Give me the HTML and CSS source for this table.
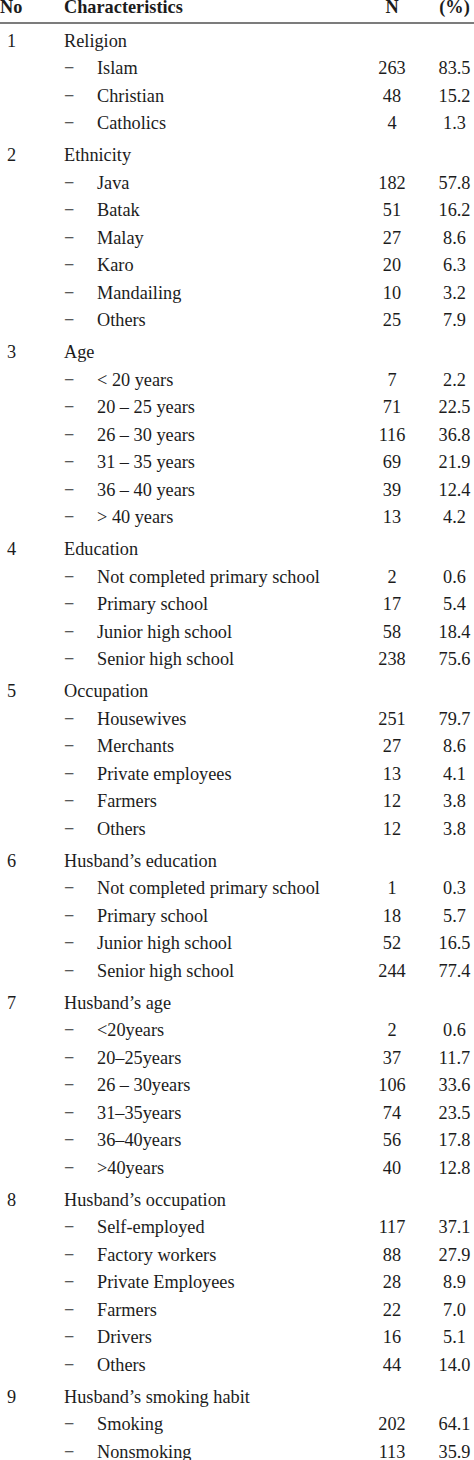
FILE: index.html
```html
<!DOCTYPE html>
<html>
<head>
<meta charset="utf-8">
<link rel="stylesheet" href="styles.css">
</head>
<body>
<div class="table">
  <div class="row head">
    <div class="no">No</div>
    <div class="ch">Characteristics</div>
    <div class="n">N</div>
    <div class="p">(%)</div>
  </div>
  <div id="body"></div>
</div>
<script src="app.js"></script>
</body>
</html>
```
FILE: app.js
```js
var data = [
  ["1","Religion",[["Islam","263","83.5"],["Christian","48","15.2"],["Catholics","4","1.3"]]],
  ["2","Ethnicity",[["Java","182","57.8"],["Batak","51","16.2"],["Malay","27","8.6"],["Karo","20","6.3"],["Mandailing","10","3.2"],["Others","25","7.9"]]],
  ["3","Age",[["< 20 years","7","2.2"],["20 \u2013 25 years","71","22.5"],["26 \u2013 30 years","116","36.8"],["31 \u2013 35 years","69","21.9"],["36 \u2013 40 years","39","12.4"],["> 40 years","13","4.2"]]],
  ["4","Education",[["Not completed primary school","2","0.6"],["Primary school","17","5.4"],["Junior high school","58","18.4"],["Senior high school","238","75.6"]]],
  ["5","Occupation",[["Housewives","251","79.7"],["Merchants","27","8.6"],["Private employees","13","4.1"],["Farmers","12","3.8"],["Others","12","3.8"]]],
  ["6","Husband\u2019s education",[["Not completed primary school","1","0.3"],["Primary school","18","5.7"],["Junior high school","52","16.5"],["Senior high school","244","77.4"]]],
  ["7","Husband\u2019s age",[["<20years","2","0.6"],["20\u201325years","37","11.7"],["26 \u2013 30years","106","33.6"],["31\u201335years","74","23.5"],["36\u201340years","56","17.8"],[">40years","40","12.8"]]],
  ["8","Husband\u2019s occupation",[["Self-employed","117","37.1"],["Factory workers","88","27.9"],["Private Employees","28","8.9"],["Farmers","22","7.0"],["Drivers","16","5.1"],["Others","44","14.0"]]],
  ["9","Husband\u2019s smoking habit",[["Smoking","202","64.1"],["Nonsmoking","113","35.9"]]]
];
var body = document.getElementById("body");
function cell(cls, text) {
  var d = document.createElement("div");
  d.className = cls;
  d.textContent = text;
  return d;
}
data.forEach(function (g, gi) {
  var r = document.createElement("div");
  r.className = "row group" + (gi === 0 ? " first" : "");
  r.appendChild(cell("no num", g[0]));
  r.appendChild(cell("ch", g[1]));
  r.appendChild(cell("n", ""));
  r.appendChild(cell("p", ""));
  body.appendChild(r);
  g[2].forEach(function (it) {
    var ir = document.createElement("div");
    ir.className = "row item";
    ir.appendChild(cell("no", ""));
    var c = document.createElement("div");
    c.className = "ch";
    c.appendChild(cell("dash", "\u2212"));
    c.appendChild(cell("label", it[0]));
    ir.appendChild(c);
    ir.appendChild(cell("n", it[1]));
    ir.appendChild(cell("p", it[2]));
    body.appendChild(ir);
  });
});
```
FILE: styles.css
```css
html, body {
  margin: 0;
  padding: 0;
  background: #ffffff;
  overflow: hidden;
}
body {
  font-family: "Liberation Serif", "Times New Roman", serif;
  font-size: 18.3px;
  color: #1c1c1c;
}
.table {
  width: 474px;
}
.row {
  display: grid;
  grid-template-columns: 64px 300px 56px 54px;
  line-height: 27.5px;
  white-space: nowrap;
}
.head {
  font-weight: bold;
  line-height: 14px;
  padding-bottom: 8px;
  border-bottom: 2px solid #7c7c7c;
}
.group {
  padding-top: 4.5px;
}
.group.first {
  padding-top: 3.5px;
}
.num {
  padding-left: 7px;
}
.n {
  text-align: center;
}
.p {
  display: flex;
  justify-content: center;
  padding-left: 15px;
}
.ch {
  display: flex;
}
.dash {
  width: 33px;
  color: #333;
}
```
